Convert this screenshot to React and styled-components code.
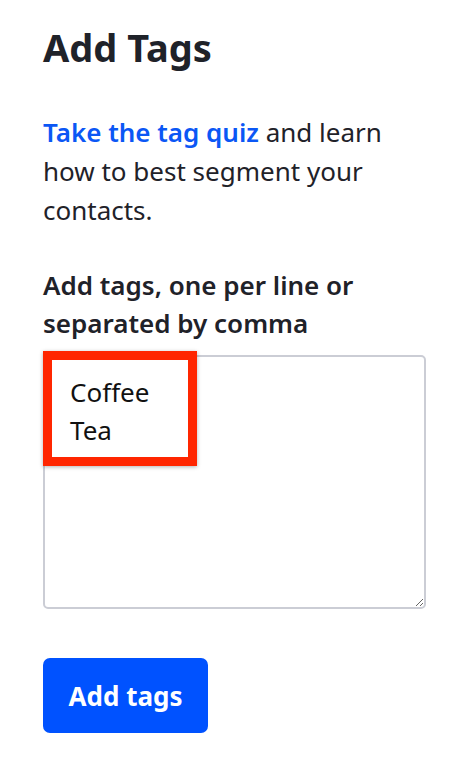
import React from "react";
import styled, { createGlobalStyle } from "styled-components";

const GlobalStyle = createGlobalStyle`
  body {
    margin: 0;
    background: #ffffff;
    font-family: "Noto Sans", "Open Sans", sans-serif;
    color: #1f2229;
  }
`;

const Page = styled.div`
  width: 384px;
  padding: 24px 0 0 43px;
  display: flex;
  flex-direction: column;
`;

const Title = styled.h1`
  margin: 0;
  font-size: 38px;
  line-height: 46px;
  font-weight: 700;
  color: #1f2229;
`;

const Intro = styled.p`
  margin: 43px 0 0;
  font-size: 26px;
  line-height: 39px;
  font-weight: 400;
  color: #1f2229;
`;

const QuizLink = styled.a`
  color: #0b57f5;
  font-weight: 600;
  text-decoration: none;
`;

const Label = styled.label`
  display: block;
  margin-top: 36px;
  font-size: 26px;
  line-height: 38px;
  font-weight: 600;
  color: #1f2229;
`;

const Field = styled.div`
  position: relative;
  margin-top: 13px;
`;

const TagArea = styled.textarea`
  display: block;
  box-sizing: border-box;
  width: 383px;
  height: 254px;
  padding: 16px 25px;
  border: 2px solid #cbcdd5;
  border-radius: 5px;
  font-family: "Noto Sans", "Open Sans", sans-serif;
  font-size: 26px;
  line-height: 38px;
  color: #111111;
  background: #ffffff;
  resize: vertical;
  outline: none;
`;

const Highlight = styled.div`
  position: absolute;
  left: 0;
  top: -4px;
  width: 154px;
  height: 115px;
  box-sizing: border-box;
  border: 9px solid #ff2600;
  box-shadow: 0 1px 4px rgba(0, 0, 0, 0.3);
  pointer-events: none;
`;

const SubmitButton = styled.button`
  align-self: flex-start;
  margin-top: 49px;
  width: 165px;
  height: 75px;
  border: none;
  border-radius: 7px;
  background: #0052ff;
  color: #ffffff;
  font-family: "Noto Sans", "Open Sans", sans-serif;
  font-size: 26px;
  font-weight: 700;
  cursor: pointer;
`;

const App = () => {
  return (
    <React.Fragment>
      <GlobalStyle />
      <Page>
        <Title>Add Tags</Title>
        <Intro>
          <QuizLink href="#quiz">Take the tag quiz</QuizLink> and learn how to best segment your contacts.
        </Intro>
        <Label htmlFor="tags">Add tags, one per line or separated by comma</Label>
        <Field>
          <TagArea id="tags" defaultValue={"Coffee\nTea"} />
          <Highlight />
        </Field>
        <SubmitButton type="button">Add tags</SubmitButton>
      </Page>
    </React.Fragment>
  );
};

export default App;
